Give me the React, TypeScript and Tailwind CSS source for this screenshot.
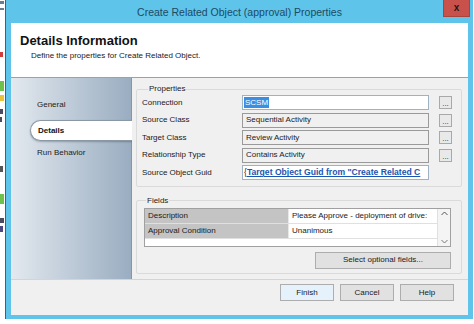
import React from "react"

const font = "font-['Liberation_Sans',Arial,sans-serif]"

function PropRow({ label, children, more = true }: any) {
  return (
    <div className="flex items-center h-[17.5px]">
      <div className="w-[100px] shrink-0 text-[#1a1a1a]">{label}</div>
      <div className="w-[187px] shrink-0 h-[15px]">{children}</div>
      {more && (
        <div className="ml-[10px] w-[13px] h-[13px] border border-[#a9a9a9] bg-[#e9e9e9] flex items-end justify-center text-[8px] leading-[9px] text-[#333]">
          ...
        </div>
      )}
    </div>
  )
}

function Btn({ label, w }: any) {
  return (
    <div
      className={`${w} h-[17px] border border-[#adadad] bg-[#e1e1e1] flex items-center justify-center text-[8px] text-[#1a1a1a]`}
    >
      {label}
    </div>
  )
}

function Desktop() {
  return (
    <div className="w-[5px] shrink-0 h-full bg-white flex flex-col overflow-hidden text-[8px] leading-[9px] text-[#333]">
      <div className="mt-[1px] h-[3px] w-[4px] bg-[#6a7c90]" />
      <div className="mt-[4px] h-[2px] w-[4px] bg-[#6a7c90]" />
      <div className="mt-[42px] h-[5px] w-[3px] bg-[#d23b3b]" />
      <div className="mt-[24px] h-[10px] w-[4px] bg-[#6cc24a]" />
      <div className="mt-[4px] h-[6px] w-[4px] bg-[#e8c33a]" />
      <div className="mt-[8px] h-[5px] w-[3px] bg-[#4a4a60]" />
      <div className="mt-[3px] h-[5px] w-[2px] bg-[#4a4a60]" />
      <div className="mt-[44px] h-[6px] w-[3px] bg-[#555]" />
      <div className="mt-[22px] h-[10px] w-[4px] bg-[#6cc24a]" />
      <div className="mt-[14px] h-[5px] w-[4px] bg-[#4a4a60]" />
      <div className="mt-[3px] h-[6px] w-[3px] bg-[#4a4a80]" />
    </div>
  )
}

export default function App() {
  return (
    <div className={`w-[474px] h-[324px] bg-white flex overflow-hidden ${font}`}>
      <Desktop />
      <div className="w-[468px] h-[319px] shrink-0 flex flex-col bg-[#5ec4ea] border-l border-[#4d5d6b] px-[5px] pb-[4px]">
        {/* title bar */}
        <div className="h-[23px] shrink-0 flex items-center justify-center relative">
          <div className="text-[10.5px] text-[#1d4a64] pt-[2px]">Create Related Object (approval) Properties</div>
          <div className="absolute right-[-2px] top-0 w-[27px] h-[17px] bg-[#c8524b] border border-[#a8443e] border-t-0 flex items-center justify-center text-[10px] font-bold text-[#2b1414] leading-none">
            x
          </div>
        </div>

        <div className="flex-1 flex flex-col bg-white text-[8px]">
          {/* header */}
          <div className="h-[55px] shrink-0 border-b border-[#a0a0a0] pl-[9px] pt-[9px]">
            <div className="text-[13px] font-bold text-[#111] leading-[17px]">Details Information</div>
            <div className="pl-[11px] mt-[2px] text-[#222] leading-[10px]">Define the properties for Create Related Object.</div>
          </div>

          {/* middle */}
          <div className="h-[201px] shrink-0 flex">
            <div className="w-[121px] shrink-0 bg-linear-to-r from-[#e3e9ef] to-[#9aadc1] border-r border-[#8796a6] flex flex-col pl-[19px]">
              <div className="mt-[16px] h-[21px] flex items-center pl-[7px] text-[#222]">General</div>
              <div className="mt-[5px] h-[21px] mr-[-1px] flex items-center pl-[7px] bg-white rounded-l-[11px] border border-r-0 border-[#8a98a6] shadow-[0_1px_2px_rgba(0,0,0,0.25)] font-bold text-[#111]">
                Details
              </div>
              <div className="mt-[1px] h-[21px] flex items-center pl-[7px] text-[#222]">Run Behavior</div>
            </div>

            <div className="flex-1 bg-[#f0f0f0] flex flex-col pl-[4px] pr-[6px] pt-[6px]">
              <fieldset className="border border-[#dadada] rounded-[2px] pl-[5px] pb-[4px]">
                <legend className="ml-[6px] px-[1px] leading-[10px] text-[#1a1a1a]">Properties</legend>
                <PropRow label="Connection">
                  <div className="h-full border border-[#9fb2c4] bg-white flex items-center pl-[1px]">
                    <span className="bg-[#3b8ee2] text-white px-[1px] leading-[11px]">SCSM</span>
                  </div>
                </PropRow>
                <PropRow label="Source Class">
                  <div className="h-full border border-[#9a9a9a] bg-[#f0f0f0] flex items-center pl-[3px] text-[#222]">Sequential Activity</div>
                </PropRow>
                <PropRow label="Target Class">
                  <div className="h-full border border-[#9a9a9a] bg-[#f0f0f0] flex items-center pl-[3px] text-[#222]">Review Activity</div>
                </PropRow>
                <PropRow label="Relationship Type">
                  <div className="h-full border border-[#9a9a9a] bg-[#f0f0f0] flex items-center pl-[3px] text-[#222]">Contains Activity</div>
                </PropRow>
                <PropRow label="Source Object Guid" more={false}>
                  <div className="h-full border border-[#9fb2c4] bg-white flex items-center pl-[1px] whitespace-nowrap text-[#1a56b0] font-bold text-[8.6px]">
                    <span className="font-normal text-[#333]">{"{"}</span>
                    <span className="underline">Target Object Guid from "Create Related C</span>
                  </div>
                </PropRow>
              </fieldset>

              <fieldset className="mt-[9px] border border-[#dadada] rounded-[2px] pl-[7px] pr-[10px] pb-[4px]">
                <legend className="ml-[2px] px-[1px] leading-[10px] text-[#1a1a1a]">Fields</legend>
                <div className="mt-[2px] border border-[#a0a0a0] bg-white flex">
                  <div className="flex-1 flex flex-col">
                    <div className="h-[15px] flex border-b border-[#e0e0e0]">
                      <div className="w-[144px] bg-[#c4c4c4] border-r border-[#e8e8e8] flex items-center pl-[3px] text-[#1a1a1a]">Description</div>
                      <div className="flex-1 flex items-center pl-[3px] text-[#1a1a1a] whitespace-nowrap">Please Approve - deployment of drive:</div>
                    </div>
                    <div className="h-[15px] flex border-b border-[#e0e0e0]">
                      <div className="w-[144px] bg-[#c4c4c4] border-r border-[#e8e8e8] flex items-center pl-[3px] text-[#1a1a1a]">Approval Condition</div>
                      <div className="flex-1 flex items-center pl-[3px] text-[#1a1a1a]">Unanimous</div>
                    </div>
                    <div className="h-[7px]" />
                  </div>
                  <div className="w-[13px] shrink-0 bg-[#f4f4f4] border-l border-[#e0e0e0] flex flex-col justify-between items-center text-[#6a6a6a]">
                    <svg width="7" height="10" viewBox="0 0 7 10"><path d="M0.5 6 L3.5 3 L6.5 6" fill="none" stroke="#555" strokeWidth="1" /></svg>
                    <svg width="7" height="10" viewBox="0 0 7 10"><path d="M0.5 4 L3.5 7 L6.5 4" fill="none" stroke="#777" strokeWidth="1" /></svg>
                  </div>
                </div>
                <div className="mt-[5px] flex justify-end">
                  <Btn label="Select optional fields..." w="w-[136px] h-[16px]" />
                </div>
              </fieldset>
            </div>
          </div>

          {/* footer */}
          <div className="flex-1 bg-[#f0f0f0] border-t border-[#d4d4d4] flex justify-end gap-[6px] pt-[4px] pr-[14px]">
            <Btn label="Finish" w="w-[54px] border-[#7eb4ea] bg-[#e5f1fb]" />
            <Btn label="Cancel" w="w-[54px]" />
            <Btn label="Help" w="w-[54px]" />
          </div>
        </div>
      </div>
    </div>
  )
}
